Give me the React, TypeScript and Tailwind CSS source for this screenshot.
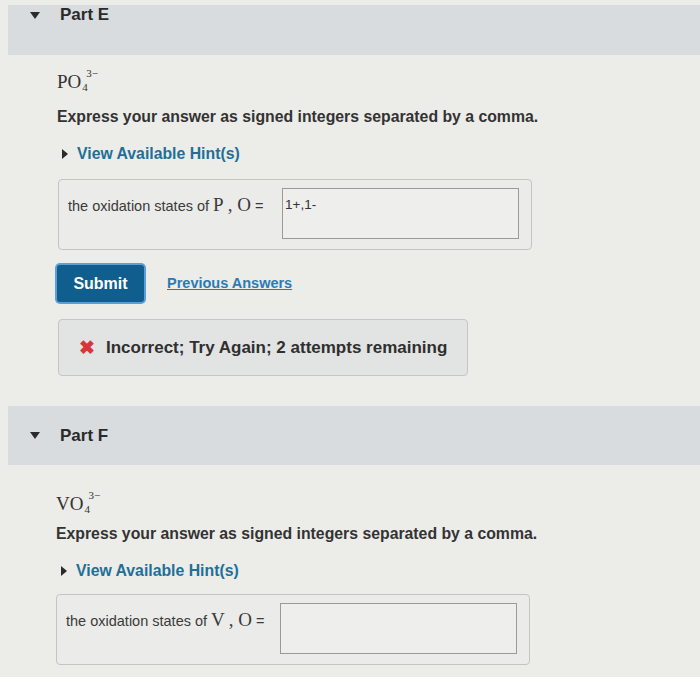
import React from "react";

function Caret({ className = "" }: { className?: string }) {
  return (
    <svg width="10" height="7" viewBox="0 0 10 7" className={className}>
      <path d="M0 0 L10 0 L5 7 Z" fill="#2b2b2b" />
    </svg>
  );
}

function HintArrow() {
  return (
    <svg width="6" height="10" viewBox="0 0 6 10">
      <path d="M0 0 L6 5 L0 10 Z" fill="#2b2b2b" />
    </svg>
  );
}

function Formula({ el }: { el: string }) {
  return (
    <div className="flex items-start font-['Liberation_Serif',serif] text-[#333] h-[26px]">
      <span className="text-[19px] leading-[26px]">{el}O</span>
      <span className="flex flex-col ml-[1px]">
        <span className="text-[11px] leading-[11px] ml-[4px] -mt-[1px]">3−</span>
        <span className="text-[11px] leading-[11px] mt-[3px]">4</span>
      </span>
    </div>
  );
}

function PartHeader({ label, className = "" }: { label: string; className?: string }) {
  return (
    <div className={`ml-[8px] bg-[#d9dcdf] flex ${className}`}>
      <div className="flex items-center h-[20px]">
        <Caret className="ml-[22px]" />
        <span className="ml-[20px] text-[17px] font-bold text-[#2a2a2a]">{label}</span>
      </div>
    </div>
  );
}

function AnswerBox({ el, value }: { el: string; value: string }) {
  return (
    <div className="w-[474px] h-[71px] border border-[#c4c4c2] rounded-[4px] bg-[#ebebe9] flex items-start pl-[9px] pr-[12px] pt-[8px]">
      <span className="mt-[7px] text-[14.5px] leading-[20px] text-[#3a3a3a] whitespace-nowrap">
        the oxidation states of{" "}
        <span className="font-['Liberation_Serif',serif] text-[19px]">{el}</span>
        <span className="ml-[4px] font-['Liberation_Serif',serif] text-[19px]">, O</span>
        <span className="ml-[4px]">=</span>
      </span>
      <div className="ml-auto w-[237px] h-[51px] border border-[#9a9a9a] bg-[#eeeeec] px-[2px] pt-[7px] text-[13.5px] leading-[18px] text-[#333]">
        {value}
      </div>
    </div>
  );
}

function Instructions() {
  return (
    <>
      <p className="text-[15.8px] leading-[18px] font-bold text-[#333] whitespace-nowrap">
        Express your answer as signed integers separated by a comma.
      </p>
      <div className="mt-[19px] flex items-center">
        <span className="ml-[5px]"><HintArrow /></span>
        <span className="ml-[9px] text-[15.8px] leading-[18px] font-bold text-[#1f6f98]">
          View Available Hint(s)
        </span>
      </div>
    </>
  );
}

export default function App() {
  return (
    <div className="w-[700px] h-[677px] overflow-hidden bg-[#ecece9] font-['Liberation_Sans',Arial,sans-serif]">
      <PartHeader label="Part E" className="mt-[5px] h-[50px] items-start" />

      <div className="pl-[57px]">
        <div className="mt-[14px]"><Formula el="P" /></div>
        <div className="mt-[13px]">
          <Instructions />
        </div>

        <div className="mt-[16px] ml-[1px]">
          <AnswerBox el="P" value="1+,1-" />
        </div>

        <div className="mt-[15px] flex items-center">
          <button className="w-[87px] h-[37px] rounded-[3px] bg-[#0f5e8e] text-white text-[16px] font-bold ring-2 ring-[#5b9fd6]">
            Submit
          </button>
          <span className="ml-[23px] text-[14.5px] font-bold text-[#2b7bb3] underline">
            Previous Answers
          </span>
        </div>

        <div className="mt-[17px] ml-[1px] w-[410px] h-[57px] rounded-[4px] border border-[#c6c6c6] bg-[#e2e3e3] flex items-center">
          <span className="ml-[20px] text-[19px] font-bold text-[#d8353b] leading-none">✖</span>
          <span className="ml-[11px] text-[17px] font-bold text-[#2f2f2f]">
            Incorrect; Try Again; 2 attempts remaining
          </span>
        </div>
      </div>

      <PartHeader label="Part F" className="mt-[30px] h-[59px] items-center" />

      <div className="pl-[56px]">
        <div className="mt-[26px]"><Formula el="V" /></div>
        <div className="mt-[8px]">
          <Instructions />
        </div>
        <div className="mt-[14px]">
          <AnswerBox el="V" value="" />
        </div>
      </div>
    </div>
  );
}
